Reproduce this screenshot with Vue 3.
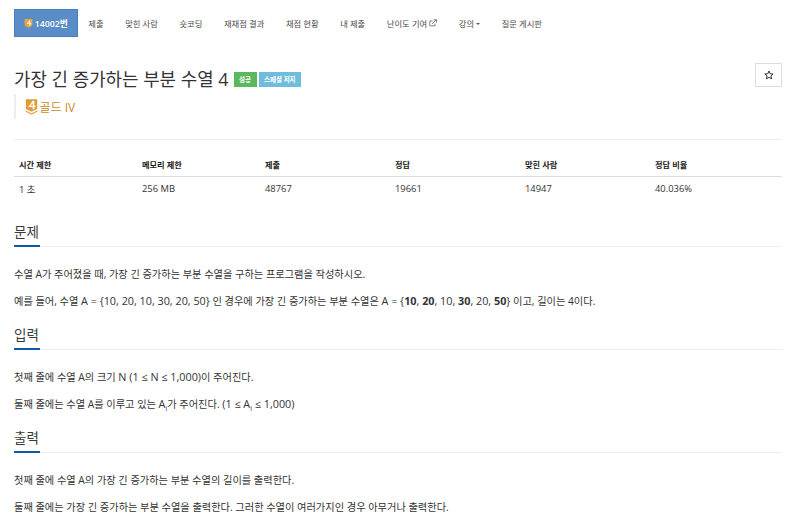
<script setup>
const links = ['제출', '맞힌 사람', '숏코딩', '재채점 결과', '채점 현황', '내 제출']
const heads = ['시간 제한', '메모리 제한', '제출', '정답', '맞힌 사람', '정답 비율']
const cells = ['1 초', '256 MB', '48767', '19661', '14947', '40.036%']
</script>

<template>
  <div class="page">
    <nav class="nav">
      <a class="link active">
        <svg class="tier small" viewBox="0 0 16 18"><path d="M1 1h14v11l-7 5-7-5z" fill="#eea23c"/><path d="M9.500 3.500 4.500 10h5v3h1.800v-3H13V8.500h-1.700v-5zM9.500 6v2.500H6.800z" fill="#fff"/></svg>
        14002번
      </a>
      <a v-for="l in links" :key="l" class="link">{{ l }}</a>
      <a class="link">난이도 기여
        <svg class="ext" viewBox="0 0 10 10"><path d="M7.500 5.800v2.700h-6.500V2.500h3.500" fill="none" stroke="#555" stroke-width=".9"/><path d="M4 6 8.500 1.500M6 1h3.500v3.500" fill="none" stroke="#555" stroke-width="1"/></svg>
      </a>
      <a class="link">강의<i class="caret"></i></a>
      <a class="link">질문 게시판</a>
    </nav>

    <header class="title-row">
      <h1>가장 긴 증가하는 부분 수열 4</h1>
      <span class="label green">성공</span>
      <span class="label blue">스페셜 저지</span>
      <button class="star" aria-label="즐겨찾기">
        <svg viewBox="0 0 12 12"><path d="M6 1.200 7.400 4.500 11 4.800 8.300 7.100 9.100 10.600 6 8.800 2.900 10.600 3.700 7.100 1 4.800 4.600 4.500z" fill="none" stroke="#222" stroke-width="1.100"/></svg>
      </button>
    </header>
    <div class="tier-row">
      <svg class="tier" viewBox="0 0 16 20"><path d="M1 1h14v12l-7 3.500-7-3.500z" fill="#e39b35"/><path d="M1 15l7 3.500 7-3.500v1.500l-7 3.500-7-3.500z" fill="#e39b35"/><path d="M9.500 3 4 10.500h5.500v3h2v-3H13V9h-1.500V3zM9.500 6v3H6.800z" fill="#fff"/></svg>
      <span>골드 IV</span>
    </div>
    <div class="rule"></div>

    <table class="stats">
      <thead><tr><th v-for="h in heads" :key="h">{{ h }}</th></tr></thead>
      <tbody><tr><td v-for="c in cells" :key="c">{{ c }}</td></tr></tbody>
    </table>

    <section class="first">
      <h2><span>문제</span></h2>
      <p>수열 A가 주어졌을 때, 가장 긴 증가하는 부분 수열을 구하는 프로그램을 작성하시오.</p>
      <p>예를 들어, 수열 <span class="m">A = {10, 20, 10, 30, 20, 50}</span> 인 경우에 가장 긴 증가하는 부분 수열은 <span class="m">A = {<b>10</b>, <b>20</b>, 10, <b>30</b>, 20, <b>50</b>}</span> 이고, 길이는 4이다.</p>
    </section>
    <section>
      <h2><span>입력</span></h2>
      <p>첫째 줄에 수열 A의 크기 <span class="m">N (1 ≤ N ≤ 1,000)</span>이 주어진다.</p>
      <p>둘째 줄에는 수열 A를 이루고 있는 <span class="m">A<sub>i</sub></span>가 주어진다. <span class="m">(1 ≤ A<sub>i</sub> ≤ 1,000)</span></p>
    </section>
    <section>
      <h2><span>출력</span></h2>
      <p>첫째 줄에 수열 A의 가장 긴 증가하는 부분 수열의 길이를 출력한다.</p>
      <p>둘째 줄에는 가장 긴 증가하는 부분 수열을 출력한다. 그러한 수열이 여러가지인 경우 아무거나 출력한다.</p>
    </section>
  </div>
</template>

<style>
html, body { margin: 0; background: #fff; overflow: hidden; }
</style>

<style scoped>
.page {
  width: 768px;
  height: 516px;
  overflow: hidden;
  padding: 9px 18px 0 14px;
  font-family: "Open Sans", "Noto Sans CJK KR", sans-serif;
  color: #333;
  font-size: 10px;
}
.nav { display: flex; height: 28px; align-items: center; }
.link {
  display: flex;
  align-items: center;
  gap: 2px;
  height: 100%;
  padding: 0 10.800px;
  font-size: 8.300px;
  color: #4a4a4a;
  white-space: nowrap;
}
.link.active {
  background: #5a8cc8;
  border: 1px solid #4a7fbe;
  box-sizing: border-box;
  color: #fff;
  font-weight: 600;
  font-size: 8.700px;
  width: 63.500px;
  padding: 0;
  justify-content: center;
}
.tier { width: 13px; height: 17px; }
.tier.small { width: 9px; height: 11px; }
.ext { width: 8px; height: 8px; }
.caret {
  width: 0; height: 0; margin-left: 0; margin-top: 1px;
  border-left: 2.500px solid transparent;
  border-right: 2.500px solid transparent;
  border-top: 2.500px solid #555;
}
.title-row { display: flex; align-items: center; margin-top: 26px; height: 31px; }
h1 { margin: 1px 0 0; font-size: 17.900px; font-weight: 400; color: #333; line-height: 26px; white-space: nowrap; }
.label {
  margin-left: 5px;
  padding: 0 5.500px;
  height: 15px;
  line-height: 15px;
  margin-top: 2px;
  font-size: 6.500px;
  font-weight: 600;
  color: #fff;
}
.label + .label { margin-left: 2px; }
.green { background: #5cb85c; }
.blue { background: #6fbddc; }
.star {
  margin-left: auto;
  align-self: flex-start;
  width: 27px;
  height: 24px;
  background: #fff;
  border: 1px solid #ddd;
  padding: 0;
  display: flex;
  align-items: center;
  justify-content: center;
  box-sizing: border-box;
}
.star svg { width: 10px; height: 10px; }
.tier-row {
  display: flex;
  align-items: center;
  gap: 1.500px;
  height: 25px;
  padding-left: 9px;
  border-left: 2px solid #eee;
  color: #c9891f;
  font-size: 12px;
}
.rule { height: 1px; background: #eee; margin-top: 20px; }
.stats { width: 768px; border-collapse: collapse; table-layout: fixed; margin: 12px 0 6px; font-size: 9.400px; }
.stats th, .stats td { padding: 0 5px; text-align: left; }
.stats th { height: 24px; font-weight: 600; border-bottom: 1px solid #ddd; color: #222; font-size: 8.200px; }
.stats td { height: 23px; }
.stats th:nth-child(1), .stats th:nth-child(2) { width: 113px; }
.stats th:nth-child(3), .stats th:nth-child(4), .stats th:nth-child(5) { width: 120px; }
section { padding-top: 14px; }
h2 {
  margin: 0;
  border-bottom: 1px solid #eee;
  font-size: 13.500px;
  font-weight: 400;
  height: 26px;
  line-height: 25px;
  color: #3a3a3a;
}
h2 span { display: inline-block; height: 25px; width: 26px; border-bottom: 2px solid #0d5ba8; white-space: nowrap; }
p { margin: 12px 0 0; font-size: 10.230px; line-height: 15px; height: 15px; color: #333; white-space: nowrap; }
h2 + p { margin-top: 20px; }
.m { font-size: 10.800px; line-height: 1; }
sub { font-size: 7px; line-height: 0; }
</style>
